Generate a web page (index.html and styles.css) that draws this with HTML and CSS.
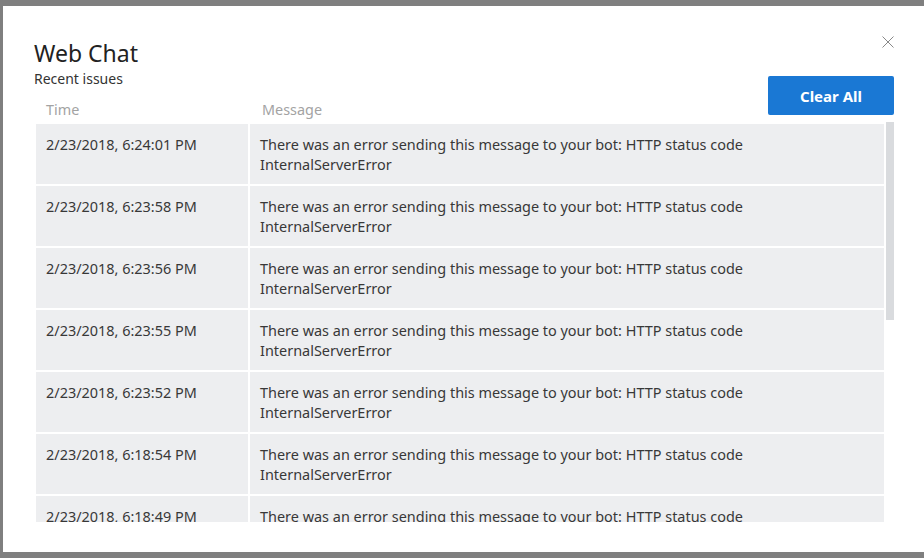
FILE: index.html
```html
<!DOCTYPE html>
<html>
<head>
<meta charset="utf-8">
<link rel="stylesheet" href="styles.css">
</head>
<body>
<div class="dialog">
  <button class="close" aria-label="Close">
    <svg width="12" height="12" viewBox="0 0 12 12"><path d="M0.5 0.5 L11.5 11.5 M11.5 0.5 L0.5 11.5" stroke="#888" stroke-width="1" fill="none"/></svg>
  </button>
  <div class="top">
    <div class="heading">
      <h1 class="title">Web Chat</h1>
      <div class="subtitle">Recent issues</div>
    </div>
    <button class="clear">Clear All</button>
  </div>
  <div class="head-row">
    <div class="h-time">Time</div>
    <div class="h-msg">Message</div>
  </div>
  <div class="list">
    <div class="scroller">
      <table class="issues">
        <tbody>
          <tr><td class="c-time">2/23/2018, 6:24:01 PM</td><td class="c-msg">There was an error sending this message to your bot: HTTP status code<br>InternalServerError</td></tr>
          <tr><td class="c-time">2/23/2018, 6:23:58 PM</td><td class="c-msg">There was an error sending this message to your bot: HTTP status code<br>InternalServerError</td></tr>
          <tr><td class="c-time">2/23/2018, 6:23:56 PM</td><td class="c-msg">There was an error sending this message to your bot: HTTP status code<br>InternalServerError</td></tr>
          <tr><td class="c-time">2/23/2018, 6:23:55 PM</td><td class="c-msg">There was an error sending this message to your bot: HTTP status code<br>InternalServerError</td></tr>
          <tr><td class="c-time">2/23/2018, 6:23:52 PM</td><td class="c-msg">There was an error sending this message to your bot: HTTP status code<br>InternalServerError</td></tr>
          <tr><td class="c-time">2/23/2018, 6:18:54 PM</td><td class="c-msg">There was an error sending this message to your bot: HTTP status code<br>InternalServerError</td></tr>
          <tr><td class="c-time">2/23/2018, 6:18:49 PM</td><td class="c-msg">There was an error sending this message to your bot: HTTP status code<br>InternalServerError</td></tr>
          <tr><td class="c-time">2/23/2018, 6:18:44 PM</td><td class="c-msg">There was an error sending this message to your bot: HTTP status code<br>InternalServerError</td></tr>
          <tr><td class="c-time">2/23/2018, 6:18:40 PM</td><td class="c-msg">There was an error sending this message to your bot: HTTP status code<br>InternalServerError</td></tr>
          <tr><td class="c-time">2/23/2018, 6:18:35 PM</td><td class="c-msg">There was an error sending this message to your bot: HTTP status code<br>InternalServerError</td></tr>
          <tr><td class="c-time">2/23/2018, 6:18:31 PM</td><td class="c-msg">There was an error sending this message to your bot: HTTP status code<br>InternalServerError</td></tr>
          <tr><td class="c-time">2/23/2018, 6:18:27 PM</td><td class="c-msg">There was an error sending this message to your bot: HTTP status code<br>InternalServerError</td></tr>
          <tr><td class="c-time">2/23/2018, 6:18:22 PM</td><td class="c-msg">There was an error sending this message to your bot: HTTP status code<br>InternalServerError</td></tr>
        </tbody>
      </table>
    </div>
    <div class="thumb"></div>
  </div>
</div>
</body>
</html>
```
FILE: styles.css
```css
html, body {
  margin: 0;
  padding: 0;
}
body {
  background: #7f7f7f;
  width: 924px;
  height: 558px;
  overflow: hidden;
  font-family: "Noto Sans", "Open Sans", sans-serif;
  color: #333;
}
.dialog {
  position: relative;
  box-sizing: border-box;
  margin: 6px 0 0 3px;
  width: 921px;
  height: 546px;
  background: #fff;
  padding: 0 30px 0 31px;
}
.close {
  position: absolute;
  top: 30px;
  right: 30px;
  width: 12px;
  height: 12px;
  padding: 0;
  border: 0;
  background: none;
  display: block;
}
.close svg { display: block; }
.top {
  display: flex;
  justify-content: space-between;
  align-items: flex-end;
  padding-top: 31px;
}
.title {
  margin: 0;
  font-size: 23px;
  font-weight: 400;
  line-height: 32px;
  color: #222;
}
.subtitle {
  font-size: 14px;
  line-height: 20px;
  color: #333;
}
.clear {
  width: 126px;
  height: 39px;
  margin-bottom: -26px;
  border: 0;
  border-radius: 2px;
  background: #1a78d4;
  color: #fff;
  font-family: "Noto Sans", sans-serif;
  font-size: 15px;
  font-weight: 700;
}
.head-row {
  display: flex;
  font-size: 14.4px;
  line-height: 20px;
  color: #a3a3a3;
  padding-top: 11px;
  height: 22px;
}
.h-time { width: 216px; padding-left: 12px; box-sizing: border-box; }
.h-msg { padding-left: 12px; }
.list {
  position: relative;
  width: 860px;
  height: 400px;
}
.scroller {
  width: 852px;
  height: 400px;
  overflow: hidden;
}
.thumb {
  position: absolute;
  top: 0;
  right: 0;
  width: 8px;
  height: 198px;
  background: #d9dbde;
}
.issues {
  width: 852px;
  border-collapse: separate;
  border-spacing: 2px;
  font-size: 14.45px;
  line-height: 20px;
  color: #383838;
}
.issues td {
  background: #edeef0;
  vertical-align: top;
  padding: 11px 10px 9px 10px;
  height: 40px;
}
.c-time { width: 192px; }
```
